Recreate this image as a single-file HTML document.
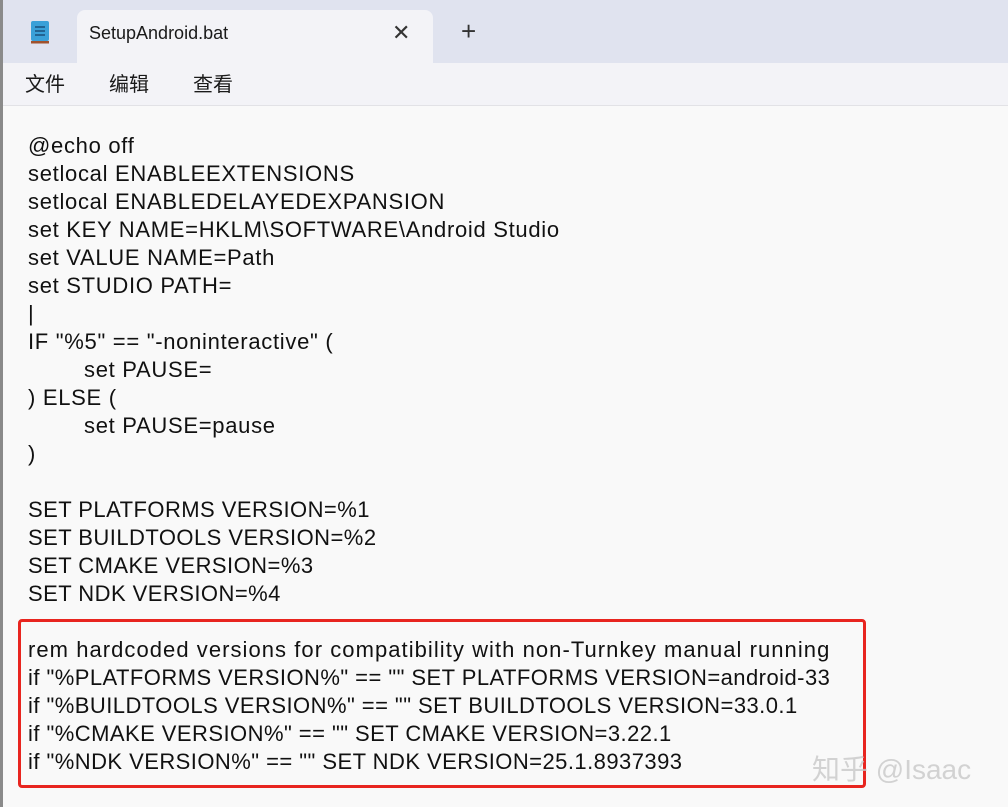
<!DOCTYPE html>
<html><head><meta charset="utf-8"><style>
*{margin:0;padding:0;box-sizing:border-box}
body{width:1008px;height:807px;overflow:hidden;background:#f9f9f9;font-family:"Liberation Sans","Noto Sans CJK SC",sans-serif;position:relative}
.left{position:absolute;left:0;top:0;width:3px;height:807px;background:#8a8a8a}
.tabbar{position:absolute;left:3px;top:0;right:0;height:63px;background:#e0e3ef}
.tab{position:absolute;left:74px;top:10px;width:356px;height:53px;background:#f3f3f7;border-radius:8px 8px 0 0}
.tab span{position:absolute;left:12px;top:13px;font-size:18px;color:#1a1a1a}
.x{position:absolute;left:315px;top:10px;font-size:22px;color:#333}
.plus{position:absolute;left:458px;top:18px;font-size:26px;color:#333;line-height:1}
.menu{position:absolute;left:3px;top:63px;right:0;height:43px;background:#f3f3f7;border-bottom:1px solid #e2e2e6}
.menu span{position:absolute;top:5px;font-size:20px;color:#1a1a1a}
.code{position:absolute;left:28px;top:132px;font-size:22px;line-height:28px;color:#111;white-space:pre;letter-spacing:0.7px}
.i{display:inline-block;width:56px}
.a{letter-spacing:1.05px}.b{letter-spacing:0.45px}
.red{position:absolute;left:18px;top:619px;width:848px;height:169px;border:3px solid #e8251f;border-radius:4px}
.wm{position:absolute;left:812px;top:748px;font-size:28px;color:rgba(200,200,200,0.8)}
</style></head><body>
<div class="left"></div>
<div class="tabbar">
 <svg style="position:absolute;left:27px;top:19px" width="20" height="26" viewBox="0 0 20 26"><rect x="1" y="2" width="18" height="20" rx="2" fill="#3aa0d8"/><g stroke="#1b4f7a" stroke-width="1.5"><line x1="5" y1="8" x2="15" y2="8"/><line x1="5" y1="12" x2="15" y2="12"/><line x1="5" y1="16" x2="15" y2="16"/></g><rect x="1" y="22" width="18" height="2.5" fill="#a0522d"/></svg>
 <div class="tab"><span>SetupAndroid.bat</span><div class="x">✕</div></div>
 <div class="plus">+</div>
</div>
<div class="menu"><span style="left:22px">文件</span><span style="left:106px">编辑</span><span style="left:190px">查看</span></div>
<div class="code">@echo off
setlocal ENABLEEXTENSIONS
setlocal ENABLEDELAYEDEXPANSION
set KEY NAME=HKLM\SOFTWARE\Android Studio
set VALUE NAME=Path
set STUDIO PATH=
|
IF "%5" == "-noninteractive" (
<span class="i"></span>set PAUSE=
) ELSE (
<span class="i"></span>set PAUSE=pause
)

<span class="b">SET PLATFORMS VERSION=%1</span>
<span class="b">SET BUILDTOOLS VERSION=%2</span>
<span class="b">SET CMAKE VERSION=%3</span>
<span class="b">SET NDK VERSION=%4</span>

<span class="a">rem hardcoded versions for compatibility with non-Turnkey manual running</span>
<span class="b">if "%PLATFORMS VERSION%" == "" SET PLATFORMS VERSION=android-33</span>
<span class="b">if "%BUILDTOOLS VERSION%" == "" SET BUILDTOOLS VERSION=33.0.1</span>
<span class="b">if "%CMAKE VERSION%" == "" SET CMAKE VERSION=3.22.1</span>
<span class="b">if "%NDK VERSION%" == "" SET NDK VERSION=25.1.8937393</span></div>
<div class="red"></div>
<div class="wm">知乎 @Isaac</div>
</body></html>
